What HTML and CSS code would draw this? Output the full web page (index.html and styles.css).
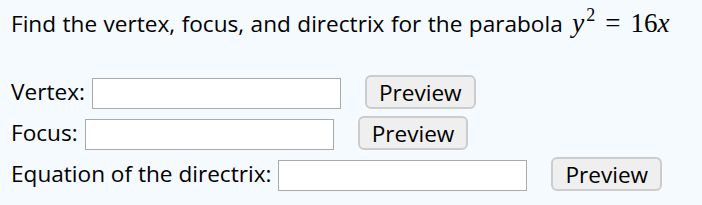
FILE: index.html
```
<!DOCTYPE html>
<html lang="en">

<head>
    <meta charset="UTF-8">
    <title>Parabola</title>
    <link rel="stylesheet" href="styles.css">
</head>

<body>

    <p class="question">
        Find the vertex, focus, and directrix for the parabola
        <span class="math"><i>y</i><sup>2</sup><span class="eq">=</span>16<i>x</i></span>
    </p>

    <div class="answers">
        <div class="answer-row">
            <label for="vertex">Vertex:</label>
            <input type="text" id="vertex">
            <button class="preview-btn">Preview</button>
        </div>
        <div class="answer-row">
            <label for="focus">Focus:</label>
            <input type="text" id="focus">
            <button class="preview-btn">Preview</button>
        </div>
        <div class="answer-row">
            <label for="directrix">Equation of the directrix:</label>
            <input type="text" id="directrix">
            <button class="preview-btn">Preview</button>
        </div>
    </div>

</body>

</html>
```

FILE: styles.css
```
* {
    margin: 0;
    padding: 0;
    box-sizing: border-box;
}

body {
    background-color: #f5faff;
    color: #000;
    font-family: "Open Sans", sans-serif;
    font-size: 22.6px;
    line-height: 30px;
    padding: 8px 11px;
}

.question {
    margin-bottom: 36px;
    word-spacing: 0.6px;
}

.math {
    font-family: "Liberation Serif", serif;
    font-size: 27px;
    margin-left: 3px;
    word-spacing: 0;
}

.math sup {
    font-size: 18px;
    vertical-align: 11px;
    line-height: 0;
    margin-left: 2px;
}

.eq {
    margin: 0 10px;
}

.answers {
    display: flex;
    flex-direction: column;
    gap: 7px;
}

.answer-row {
    display: flex;
    align-items: flex-end;
}

.answer-row label {
    align-self: center;
    margin-right: 7px;
}

.answer-row input {
    width: 249px;
    height: 31px;
    border: 1px solid #aaa;
    background-color: white;
    margin-right: 24px;
}

.preview-btn {
    height: 34px;
    padding: 0 12px;
    border: 2px solid #ccc;
    border-radius: 6px;
    background-color: #efefef;
    color: #000;
    font-family: "Open Sans", sans-serif;
    font-size: 22.6px;
}
```
